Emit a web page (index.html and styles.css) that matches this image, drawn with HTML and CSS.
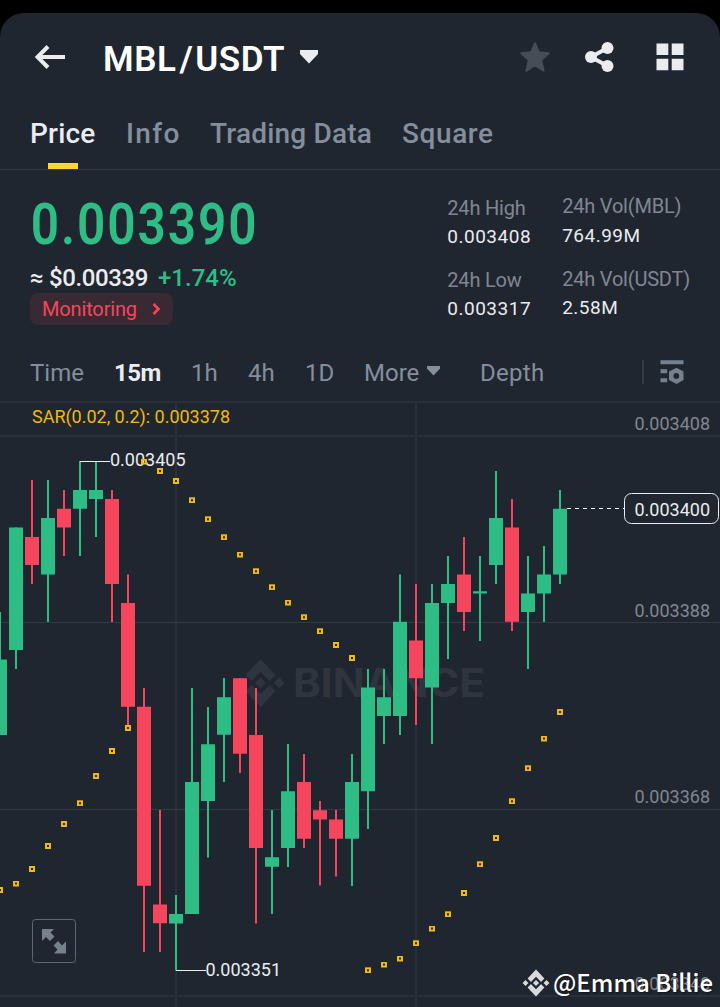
FILE: index.html
```html
<!DOCTYPE html>
<html lang="en">
<head>
<meta charset="utf-8">
<title>MBL/USDT</title>
<link rel="stylesheet" href="styles.css">
</head>
<body>
<main class="panel">
  <header class="header">
    <svg class="back" width="30" height="24" viewBox="0 0 30 24"><path d="M30 12H3M13 1.500 2.500 12 13 22.500" fill="none" stroke="#eaecef" stroke-width="4"/></svg>
    <h1 class="pair">MBL<span class="slash">/</span>USDT</h1>
    <svg class="caret" width="18" height="14" viewBox="0 0 18 14"><path d="M0 0H18V4L9 13.500 0 4Z" fill="#eaecef"/></svg>
    <div class="actions">
      <svg width="30" height="30" viewBox="0 0 30 30"><path d="M15 1.200 18.800 10.300 28.800 11.200 21.200 18 23.600 28.600 15 23.200 6.400 28.600 8.800 18 1.200 11.200 11.200 10.300Z" fill="#474d57" stroke="#474d57" stroke-width="2" stroke-linejoin="round"/></svg>
      <svg width="30" height="30" viewBox="0 0 30 30"><path d="M22.500 6 6 15 22.500 24" fill="none" stroke="#eaecef" stroke-width="4"/><g fill="#eaecef"><circle cx="6" cy="15" r="6"/><circle cx="22.500" cy="6" r="6"/><circle cx="22.500" cy="24" r="6"/></g></svg>
      <svg width="28" height="28" viewBox="0 0 28 28"><path d="M.5.500H12.300V12H.5ZM15.700.500H27.500V12H15.700ZM.5 15.700H12.300V27.200H.5ZM15.700 15.700H27.500V27.200H15.700Z" fill="#eaecef"/></svg>
    </div>
  </header>

  <nav class="tabs">
    <span class="tab tab-active">Price</span>
    <span class="tab tab-info">Info</span>
    <span class="tab tab-data">Trading Data</span>
    <span class="tab tab-square">Square</span>
  </nav>

  <section class="summary">
    <div class="quote">
      <div class="last">0.003390</div>
      <div class="sub"><span class="approx">≈</span><span class="fiat">$0.00339</span><span class="change">+1.74%</span></div>
      <div class="badge"><span>Monitoring</span><svg width="9" height="12" viewBox="0 0 9 12"><path d="M1.500 1 6.500 6 1.500 11" fill="none" stroke="#f6465d" stroke-width="2.600"/></svg></div>
    </div>
    <dl class="stats stats-price">
      <dt>24h High</dt><dd>0.003408</dd>
      <dt>24h Low</dt><dd>0.003317</dd>
    </dl>
    <dl class="stats stats-volume">
      <dt>24h Vol(MBL)</dt><dd>764.99M</dd>
      <dt class="second">24h Vol(USDT)</dt><dd>2.58M</dd>
    </dl>
  </section>

  <nav class="intervals">
    <span class="iv iv-time">Time</span>
    <span class="iv iv-15 iv-active">15m</span>
    <span class="iv iv-1h">1h</span>
    <span class="iv iv-4h">4h</span>
    <span class="iv iv-1d">1D</span>
    <span class="iv iv-more">More <svg width="13" height="10" viewBox="0 0 13 10"><path d="M0 0H13V2.500L6.500 9.500 0 2.500Z" fill="#848e9c"/></svg></span>
    <span class="iv iv-depth">Depth</span>
    <span class="settings"><svg width="24" height="24" viewBox="0 0 24 24"><path d="M.5.300H23.500V4.200H.5ZM.5 9.200H7.200V13.200H.5ZM.5 18.200H7.200V22.200H.5Z" fill="#76808f"/><path fill-rule="evenodd" d="M16.500 7.700 23.500 11.500V20L16.500 24 9 20V11.500ZM16.300 13A2.900 2.900 0 1 0 16.300 18.800 2.900 2.900 0 1 0 16.300 13Z" fill="#76808f"/></svg></span>
  </nav>

  <section class="chart">
    <svg width="720" height="606" viewBox="0 401 720 606">
      <defs>
        <marker id="sar" markerUnits="userSpaceOnUse" markerWidth="6" markerHeight="6" refX="3" refY="3"><rect x="1" y="1" width="4" height="4" fill="none" stroke="#f0b90b" stroke-width="2"/></marker>
        <g id="logo"><path d="M-15-8 0-24 15-8 9-2 0-11-9-2ZM-15 8 0 24 15 8 9 2 0 11-9 2ZM-5.500 0 0-5.500 5.500 0 0 5.500ZM-24 0-18.700-5.500-13.500 0-18.700 5.500ZM13.500 0 18.700-5.500 24 0 18.700 5.500Z"/></g>
      </defs>
      <path class="grid" d="M0 402H720M0 436H720M0 996H720M176 403V1007M416 403V1007"/>
      <path class="grid-thin" d="M0 622.500H720M0 809.500H720"/>
      <g class="brand"><use href="#logo" x="260.500" y="683"/><text x="293" y="697" textLength="192" lengthAdjust="spacingAndGlyphs">BINANCE</text></g>
      <g class="scale">
        <text x="634.500" y="430">0.003408</text>
        <text x="634.500" y="617">0.003388</text>
        <text x="634.500" y="803">0.003368</text>
        <text x="634.500" y="990">0.003348</text>
      </g>
      <text class="indicator" x="32" y="423" textLength="198">SAR(0.02, 0.2): 0.003378</text>
      <path class="wick up" d="M0 612V735M16 527.500V669M48 480V622M80 461V556M96 461V537M176 895V970.500M192 688V914M208 707V857.500M224 678V782M272 810V914M288 744V867M352 754V886M368 669V829M384 669V744M400 574.500V735M432 584V744M448 556V659M480 556V641M496 471V584M528 556V669M544 546V622M560 490V584"/>
      <path class="wick down" d="M32 480V584M64 490V556M112 490V622M128 574.500V725M144 688V952M160 810V952M240 678V773M256 688V923.500M304 754V848M320 801V885.500M336 810V876.500M416 584V725M464 537V631M512 499V631"/>
      <path class="body up" d="M0 659.500V735M16 527.500V650M48 518V574.500M80 490V508.700M96 490V499M176 914V923.500M192 782V914M208 744.300V801M224 697.300V734.700M272 857.300V866.700M288 791.300V848M352 782V838.700M368 687.500V791.300M384 697.300V716M400 621.700V716M432 603V687.500M448 584V603M480 591.300V593.500M496 518V565M528 593.500V612M544 574.500V593.500M560 508.700V574.500"/>
      <path class="body down" d="M32 537V565M64 508.700V527.500M112 499V584M128 603V706.700M144 706.700V885.700M160 904.500V923.300M240 678.300V753.700M256 735V848M304 782V838.700M320 810.200V819.500M336 819.500V838.700M416 640.500V678.300M464 574.500V612M512 527.500V621.700"/>
      <path class="guide" d="M80 461.500H110M176 970.500H206"/>
      <text class="extreme" x="110" y="466">0.003405</text>
      <text class="extreme" x="205.500" y="976">0.003351</text>
      <path class="sar" d="M0 890 16 883.500 32 869 48 846 64 824 80 803.300 96 776 112 751 128 728 144 461.500 160 471 176 481 192 500.300 208 519.300 224 537.300 240 554.500 256 571.300 272 587.300 288 602.500 304 617.300 320 631.300 336 645 352 658 368 970.300 384 964.500 400 958.500 416 943.300 432 928.500 448 914.300 464 893 480 864.300 496 838 512 801.300 528 768.300 544 738.500 560 712"/>
      <path class="guide dashed" d="M567 508.500H624"/>
      <rect class="current-box" x="624.500" y="493.500" width="94" height="30" rx="7"/>
      <text class="current" x="634.500" y="516">0.003400</text>
      <g class="expand">
        <rect x="32.500" y="919.500" width="43" height="43" rx="3"/>
        <path d="M42 929H54L50.500 932.500 54.500 936.500 50 941 46 937 42 941ZM66 953.500H54L57.500 949.500 53.500 945.500 58 941 62 945.500 66 941.500Z"/>
      </g>
      <g class="author"><use href="#logo" transform="translate(536 983) scale(.56)"/><text x="553" y="992" textLength="160">@Emma Billie</text></g>
    </svg>
  </section>
</main>
</body>
</html>
```
FILE: styles.css
```css
* { box-sizing: border-box; }
body { margin: 0; padding-top: 13px; background: #000; font-family: Roboto, "Liberation Sans", sans-serif; color: #eaecef; }
.panel { width: 720px; height: 994px; overflow: hidden; background: #202630; border-radius: 24px 24px 0 0; }
.header { display: flex; align-items: center; height: 88px; padding: 0 36px 0 35px; }
.pair { margin: 5px 0 0 38px; width: 181px; font-size: 35px; line-height: 40px; font-weight: 600; letter-spacing: .55px; color: #fff; white-space: nowrap; }
.slash { margin: 0 2px 0 3px; }
.caret { margin-left: 16px; }
.actions { display: flex; align-items: center; margin-left: auto; }
.actions svg + svg { margin-left: 35px; }
.actions svg:last-child { margin-left: 41px; }
.tabs { display: flex; height: 69px; padding: 0 30px; border-bottom: 1px solid #333b47; font-size: 28px; font-weight: 500; line-height: 66px; color: #848e9c; white-space: nowrap; }
.tab { letter-spacing: .2px; }
.tab-active { position: relative; width: 96px; color: #eaecef; }
.tab-active::after { content: ""; position: absolute; left: 18px; bottom: 0; width: 30px; height: 6px; background: #fcd535; }
.tab-info { width: 84px; letter-spacing: 1.4px; }
.tab-data { width: 192px; }
.tab-square { letter-spacing: .6px; }
.summary { display: flex; height: 173px; padding: 24px 30px 0; white-space: nowrap; }
.quote { width: 418px; }
.last { height: 69px; padding-left: 1px; font-size: 57px; line-height: 62px; font-weight: 600; letter-spacing: 2.2px; transform: scaleX(.87); transform-origin: 0 0; color: #2ebd85; }
.sub { display: flex; height: 30px; font-size: 24px; line-height: 31px; font-weight: 500; }
.approx { width: 19px; }
.fiat { width: 109px; letter-spacing: -.4px; }
.change { color: #2ebd85; }
.badge { display: flex; align-items: center; justify-content: space-between; width: 143px; height: 32px; padding: 0 12px; border-radius: 8px; background: #382932; color: #f6465d; font-size: 20px; letter-spacing: -.15px; }
.stats { margin: 0; font-size: 19px; }
.stats-price { width: 115px; padding-top: 2px; }
.stats dt { height: 28px; line-height: 24px; color: #808692; font-size: 20px; letter-spacing: -.2px; }
.stats dd { margin: 0; height: 44px; line-height: 26px; color: #eaecef; letter-spacing: .5px; }
.stats .second { padding-top: 1px; }
.stats-volume dd { line-height: 27px; }
.intervals { display: flex; height: 58px; padding: 0 36px 0 30px; font-size: 24px; line-height: 60px; color: #848e9c; white-space: nowrap; }
.iv-active { color: #eaecef; font-weight: 700; letter-spacing: -.5px; }
.iv-time { width: 84px; }
.iv-15 { width: 77px; }
.iv-1h { width: 57px; }
.iv-4h { width: 57px; }
.iv-1d { width: 59px; }
.iv-more { width: 116px; }
.iv-more svg { margin-left: 2px; vertical-align: 5px; }
.iv-depth { letter-spacing: .3px; }
.settings { display: flex; align-items: center; margin: 17px 0 0 auto; height: 24px; padding-left: 16px; border-left: 2px solid #333b47; }
.chart svg { display: block; }
.grid { stroke: #2a303b; stroke-width: 2; }
.grid-thin { stroke: #333b47; }
.brand { fill: #2f343f; font: 700 39px Inter, sans-serif; }
.scale, .extreme, .current, .indicator { font-size: 18px; }
.scale { fill: #808692; }
.extreme, .current { fill: #eaecef; }
.indicator { fill: #f0b90b; }
.wick { stroke-width: 2; }
.body { stroke-width: 14; }
.up { stroke: #2ebd85; }
.down { stroke: #f6465d; }
.sar { fill: none; marker-start: url(#sar); marker-mid: url(#sar); marker-end: url(#sar); }
.guide { stroke: #eaecef; }
.dashed { stroke-dasharray: 4 4; }
.current-box { fill: #202630; stroke: #eaecef; }
.expand rect { fill: none; stroke: #5f6774; }
.expand path { fill: #76808f; }
.author { fill: #d8d9db; }
.author text { fill: #fff; font: 500 24px "Noto Sans CJK SC", "Noto Sans", sans-serif; text-shadow: 1px 1px 2px #0008; }
```
